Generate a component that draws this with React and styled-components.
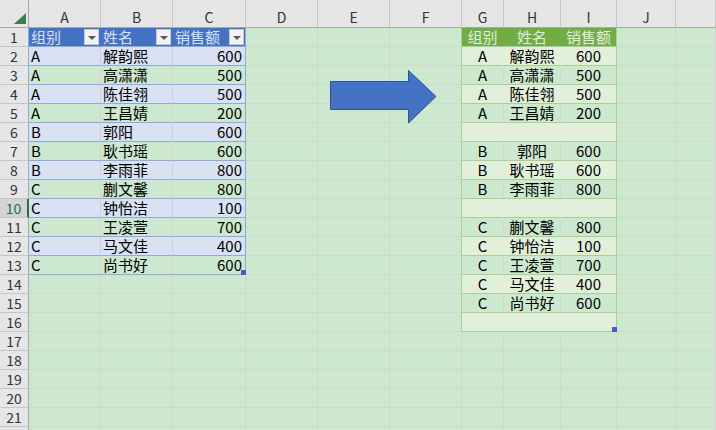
import React from 'react';
import styled, { createGlobalStyle, css } from 'styled-components';

const GRID = '#d4d4d4';
const SHEET = '#cce8cf';
const HEAD_BG = '#e6e6e6';
const HEAD_LINE = '#c6c6c6';
const HEAD_EDGE = '#a8a8a8';
const BLUE = '#4472c4';
const BLUE_BAND = '#d9e1f2';
const BLUE_LINE = '#8ea9db';
const GREEN = '#70ad47';
const GREEN_BAND = '#e2efda';
const GREEN_LINE = '#a9d08e';
const ACTIVE = '#217346';

const Global = createGlobalStyle`
  html, body { margin: 0; padding: 0; background: ${SHEET}; overflow: hidden; }
  body { font-family: "Noto Sans CJK SC", "Liberation Sans", sans-serif; }
`;

const Sheet = styled.div`
  position: relative;
  display: grid;
  grid-template-columns: 29px 72px 72px 73px 72px 72px 72px 42px 57px 56px 59px 1fr;
  grid-template-rows: 28px;
  grid-auto-rows: 19px;
  width: 716px;
  height: 430px;
  overflow: hidden;
  background: ${SHEET};
`;

const CellBase = styled.div`
  position: relative;
  box-sizing: border-box;
  display: flex;
  align-items: center;
  padding: 0 2px;
  font-size: 15px;
  line-height: 18px;
  white-space: nowrap;
  color: #000;
  border-right: 1px solid ${GRID};
  border-bottom: 1px solid ${GRID};
`;

const Corner = styled(CellBase)`
  background: ${HEAD_BG};
  border-right-color: ${HEAD_EDGE};
  border-bottom-color: ${HEAD_EDGE};
  padding: 13px 2px 3px 14px;
  align-items: stretch;
`;

const CornerMark = styled.svg`
  display: block;
`;

const ColHead = styled(CellBase)`
  background: ${HEAD_BG};
  border-right-color: ${HEAD_LINE};
  border-bottom-color: ${HEAD_EDGE};
  justify-content: center;
  align-items: flex-end;
  padding-bottom: 1px;
  font-size: 14px;
  color: #333;
`;

const RowHead = styled(CellBase)`
  background: ${(p) => (p.$active ? '#d3d3d3' : HEAD_BG)};
  border-bottom-color: ${HEAD_LINE};
  border-right: ${(p) => (p.$active ? `2px solid ${ACTIVE}` : `1px solid ${p.$edge || HEAD_EDGE}`)};
  justify-content: center;
  font-size: 14px;
  color: ${(p) => (p.$active ? ACTIVE : '#333')};
`;

const PlainCell = styled(CellBase)`
  border-right-color: ${(p) => p.$edge || GRID};
`;

const BlueHeadCell = styled(CellBase)`
  background: ${BLUE};
  color: ${BLUE_BAND};
  border-right-color: ${(p) => (p.$edge ? BLUE_LINE : BLUE)};
  border-bottom-color: ${BLUE_LINE};
  padding-right: 1px;
`;

const BlueRowCell = styled(CellBase)`
  background: ${(p) => (p.$band ? BLUE_BAND : 'transparent')};
  border-right-color: ${(p) => (p.$edge ? BLUE_LINE : p.$band ? '#c6cfe6' : GRID)};
  border-bottom-color: ${BLUE_LINE};
  ${(p) => p.$right && css`justify-content: flex-end; padding-right: 3px;`}
`;

const GreenHeadCell = styled(CellBase)`
  background: ${GREEN};
  color: ${GREEN_BAND};
  justify-content: center;
  border-right-color: ${(p) => (p.$edge ? GREEN_LINE : GREEN)};
  border-bottom-color: ${GREEN_LINE};
`;

const GreenRowCell = styled(CellBase)`
  background: ${(p) => (p.$band ? GREEN_BAND : 'transparent')};
  justify-content: center;
  border-right-color: ${(p) => (p.$edge ? GREEN_LINE : p.$band ? GREEN_BAND : GRID)};
  border-bottom-color: ${GREEN_LINE};
`;

const FilterBtn = styled.span`
  margin-left: auto;
  width: 15px;
  height: 16px;
  box-sizing: border-box;
  background: #f3f3f3;
  border: 1px solid #c9c9c9;
  display: flex;
  align-items: center;
  justify-content: center;
  &::after {
    content: '';
    border-left: 4px solid transparent;
    border-right: 4px solid transparent;
    border-top: 4px solid #5a5a5a;
    margin-top: 1px;
  }
`;

const Handle = styled.span`
  position: absolute;
  right: -1px;
  bottom: -1px;
  width: 5px;
  height: 5px;
  background: #4a5cc0;
  z-index: 2;
`;

const ArrowShape = styled.svg`
  position: absolute;
  left: 329px;
  top: 69px;
  z-index: 3;
`;

const COLS = ['A', 'B', 'C', 'D', 'E', 'F', 'G', 'H', 'I', 'J', ''];
const ROW_COUNT = 22;
const LABELED_ROWS = 21;

const LEFT_HEAD = ['组别', '姓名', '销售额'];
const LEFT = [
  ['A', '解韵熙', 600],
  ['A', '高潇潇', 500],
  ['A', '陈佳翎', 500],
  ['A', '王昌婧', 200],
  ['B', '郭阳', 600],
  ['B', '耿书瑶', 600],
  ['B', '李雨菲', 800],
  ['C', '蒯文馨', 800],
  ['C', '钟怡洁', 100],
  ['C', '王凌萱', 700],
  ['C', '马文佳', 400],
  ['C', '尚书好', 600],
];

const RIGHT = [
  ['A', '解韵熙', 600],
  ['A', '高潇潇', 500],
  ['A', '陈佳翎', 500],
  ['A', '王昌婧', 200],
  null,
  ['B', '郭阳', 600],
  ['B', '耿书瑶', 600],
  ['B', '李雨菲', 800],
  null,
  ['C', '蒯文馨', 800],
  ['C', '钟怡洁', 100],
  ['C', '王凌萱', 700],
  ['C', '马文佳', 400],
  ['C', '尚书好', 600],
  null,
];

function renderCell(r, c) {
  const key = `${r}-${c}`;
  if (c >= 1 && c <= 3 && r <= 13) {
    const edge = c === 3;
    if (r === 1) {
      return (
        <BlueHeadCell key={key} $edge={edge}>
          {LEFT_HEAD[c - 1]}
          <FilterBtn />
        </BlueHeadCell>
      );
    }
    const row = LEFT[r - 2];
    return (
      <BlueRowCell key={key} $band={r % 2 === 0} $edge={edge} $right={c === 3}>
        {row[c - 1]}
        {r === 13 && c === 3 && <Handle />}
      </BlueRowCell>
    );
  }
  if (c >= 7 && c <= 9 && r <= 16) {
    const edge = c === 9;
    if (r === 1) {
      return (
        <GreenHeadCell key={key} $edge={edge}>
          {LEFT_HEAD[c - 7]}
        </GreenHeadCell>
      );
    }
    const row = RIGHT[r - 2];
    return (
      <GreenRowCell key={key} $band={r % 2 === 0} $edge={edge}>
        {row ? row[c - 7] : ''}
        {r === 16 && c === 9 && <Handle />}
      </GreenRowCell>
    );
  }
  const edge = c === 6 && r <= 16 ? GREEN_LINE : undefined;
  return <PlainCell key={key} $edge={edge} />;
}

export default function App() {
  const rows = [];
  for (let r = 1; r <= ROW_COUNT; r++) {
    rows.push(
      <RowHead key={`h${r}`} $active={r === 10} $edge={r <= 13 ? BLUE_LINE : undefined}>
        {r <= LABELED_ROWS ? r : ''}
      </RowHead>
    );
    for (let c = 1; c <= COLS.length; c++) rows.push(renderCell(r, c));
  }

  return (
    <>
      <Global />
      <Sheet>
        <Corner>
          <CornerMark width="12" height="11" viewBox="0 0 12 11">
            <polygon points="12,0 12,11 0,11" fill="#3e7d4c" />
          </CornerMark>
        </Corner>
        {COLS.map((l, i) => (
          <ColHead key={`c${i}`}>{l}</ColHead>
        ))}
        {rows}
        <ArrowShape width="109" height="56" viewBox="0 0 109 56">
          <polygon
            points="1.5,12.5 79.5,12.5 79.5,1.5 107,27.5 79.5,54 79.5,40.5 1.5,40.5"
            fill={BLUE}
            stroke="#2f528f"
            strokeWidth="1"
          />
        </ArrowShape>
      </Sheet>
    </>
  );
}
